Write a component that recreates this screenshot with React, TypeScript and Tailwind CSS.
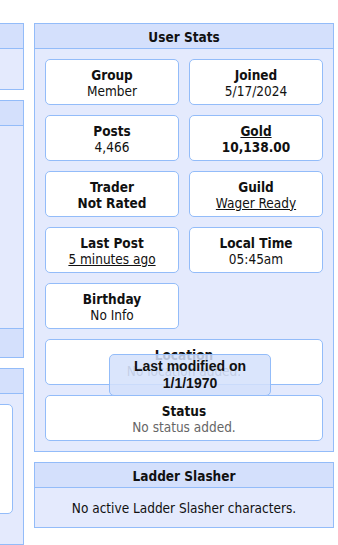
import type { ReactNode } from "react";

type Stat = {
  label: string;
  value: string;
  labelLink?: boolean;
  valueLink?: boolean;
  valueBold?: boolean;
  muted?: boolean;
  wide?: boolean;
};

const stats: Stat[] = [
  { label: "Group", value: "Member" },
  { label: "Joined", value: "5/17/2024" },
  { label: "Posts", value: "4,466" },
  { label: "Gold", value: "10,138.00", labelLink: true, valueBold: true },
  { label: "Trader", value: "Not Rated", valueBold: true },
  { label: "Guild", value: "Wager Ready", valueLink: true },
  { label: "Last Post", value: "5 minutes ago", valueLink: true },
  { label: "Local Time", value: "05:45am" },
  { label: "Birthday", value: "No Info" },
  { label: "Location", value: "No location added.", muted: true, wide: true },
  { label: "Status", value: "No status added.", muted: true, wide: true },
];

function Panel({ title, children }: { title?: string; children?: ReactNode }) {
  return (
    <div className="border border-[#93bcf9] bg-[#e4eafd]">
      <div className="flex h-[25px] items-center justify-center border-b border-[#93bcf9] bg-[#d4e0fc] pt-[2px] font-bold text-[#111]">
        {title}
      </div>
      {children}
    </div>
  );
}

function StatCard({ stat }: { stat: Stat }) {
  return (
    <div
      className={`flex h-[46px] flex-col items-center justify-center rounded-[5px] border border-[#93bcf9] bg-white pt-[1px] leading-[16px] ${
        stat.wide ? "col-span-2" : ""
      }`}
    >
      <span className={`font-bold text-[#111] ${stat.labelLink ? "underline" : ""}`}>
        {stat.label}
      </span>
      <span
        className={`${stat.valueBold ? "font-bold" : ""} ${stat.valueLink ? "underline" : ""} ${
          stat.muted ? "text-[#666]" : "text-[#111]"
        }`}
      >
        {stat.value}
      </span>
    </div>
  );
}

export default function App() {
  return (
    <div
      className="flex h-[545px] gap-[10px] overflow-hidden bg-white pt-[23px] text-[13.5px]"
      style={{ fontFamily: '"DejaVu Sans Condensed", "DejaVu Sans", sans-serif' }}
    >
      {/* left column, mostly scrolled out of view */}
      <div className="ml-[-177px] flex w-[201px] shrink-0 flex-col gap-[10px]">
        <Panel>
          <div className="h-[40px]" />
        </Panel>
        <div className="border border-[#93bcf9] bg-[#e4eafd]">
          <div className="h-[25px] border-b border-[#93bcf9] bg-[#d4e0fc]" />
          <div className="h-[202px]" />
          <div className="h-[29px] border-t border-[#93bcf9] bg-[#d4e0fc]" />
        </div>
        <div className="h-[200px] border border-[#93bcf9] bg-[#e4eafd]">
          <div className="h-[25px] border-b border-[#93bcf9] bg-[#d4e0fc]" />
          <div className="pr-[10px] pt-[10px]">
            <div className="h-[110px] rounded-[5px] border border-[#93bcf9] bg-white" />
          </div>
        </div>
      </div>

      {/* right column */}
      <div className="flex w-[300px] shrink-0 flex-col gap-[10px]">
        <Panel title="User Stats">
          <div className="relative grid grid-cols-2 gap-[10px] p-[10px]">
            {stats.map((s) => (
              <StatCard key={s.label} stat={s} />
            ))}
            <div
              className="absolute left-[74px] top-[305px] flex h-[42px] w-[162px] flex-col items-center justify-center rounded-[5px] border border-[#93bcf9] bg-[#d4e0fc]/85 text-[14px] font-bold leading-[17px] text-[#111]"
              style={{ fontFamily: '"Liberation Sans", Arial, sans-serif' }}
            >
              <span>Last modified on</span>
              <span>1/1/1970</span>
            </div>
          </div>
        </Panel>
        <Panel title="Ladder Slasher">
          <div className="flex h-[39px] items-center justify-center pt-[2px] text-[#111]">
            No active Ladder Slasher characters.
          </div>
        </Panel>
      </div>
    </div>
  );
}
